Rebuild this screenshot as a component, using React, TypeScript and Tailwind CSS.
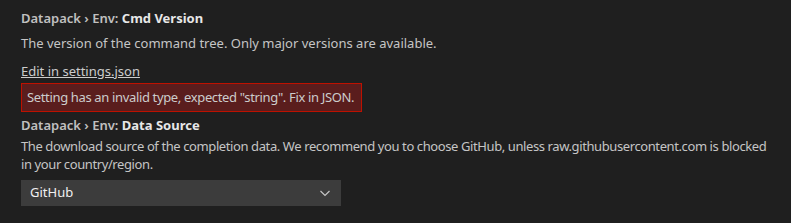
import React from 'react';

function Chevron() {
  return (
    <svg width="16" height="16" viewBox="0 0 16 16" fill="none" className="text-[#c5c5c5]">
      <path d="M3.5 6l4.5 4.5L12.5 6" stroke="currentColor" strokeWidth="1.2" />
    </svg>
  );
}

export default function App() {
  return (
    <div
      className="w-[791px] h-[223px] bg-[#1f1f1f] text-[13px] text-[#cccccc] pl-[21px] pt-[9px] overflow-hidden"
      style={{ fontFamily: '"Noto Sans", "Open Sans", sans-serif' }}
    >
      {/* Cmd Version */}
      <div className="leading-[18px] font-semibold">
        <span className="text-[#c0c0c0]">Datapack › Env: </span>
        <span className="text-[#e7e7e7] font-bold">Cmd Version</span>
      </div>
      <div className="mt-[7px] leading-[18px] text-[#c5c5c5]">
        The version of the command tree. Only major versions are available.
      </div>
      <div className="mt-[10px] leading-[18px]">
        <a className="underline text-[#cccccc]">Edit in settings.json</a>
      </div>
      <div className="mt-[3px] w-[341px] h-[29px] bg-[#5a1d1d] border border-[#be1100] pl-[5px] flex items-center text-[#cccccc] whitespace-nowrap tracking-[-0.35px]">
        Setting has an invalid type, expected "string". Fix in JSON.
      </div>

      {/* Data Source */}
      <div className="mt-[4px] leading-[18px] font-semibold">
        <span className="text-[#c0c0c0]">Datapack › Env: </span>
        <span className="text-[#e7e7e7] font-bold">Data Source</span>
      </div>
      <div className="mt-[3px] leading-[18px] text-[#c5c5c5] pr-[18px] tracking-[-0.4px]">
        The download source of the completion data. We recommend you to choose GitHub, unless raw.githubusercontent.com is blocked in your country/region.
      </div>
      <div className="mt-[7px] w-[320px] h-[26px] bg-[#3c3c3c] flex items-center justify-between pl-[9px] pr-[8px] text-[#f0f0f0]">
        <span>GitHub</span>
        <Chevron />
      </div>
    </div>
  );
}
